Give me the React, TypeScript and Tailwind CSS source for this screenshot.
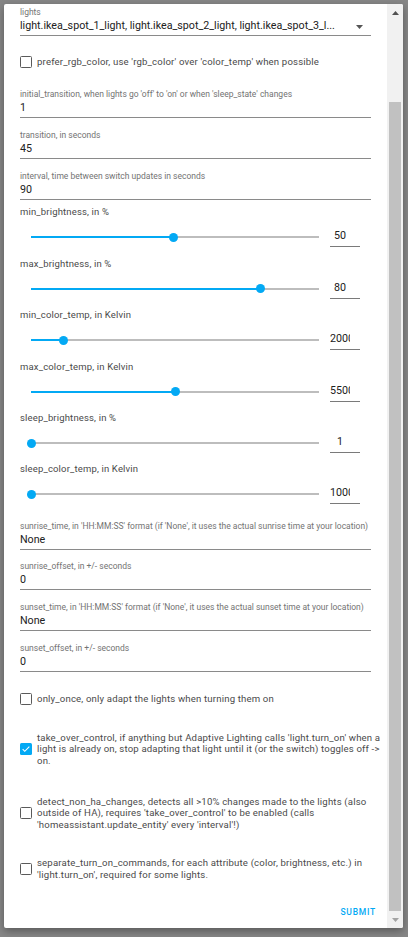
import React from "react";

type SliderDef = { label: string; frac: number; value: string; cls: string };

const sliders: SliderDef[] = [
  { label: "min_brightness, in %", frac: 49 / 99, value: "50", cls: "mt-[6.2px]" },
  { label: "max_brightness, in %", frac: 79 / 99, value: "80", cls: "mt-[10.4px]" },
  { label: "min_color_temp, in Kelvin", frac: 1000 / 9000, value: "2000", cls: "mt-[10.4px]" },
  { label: "max_color_temp, in Kelvin", frac: 4500 / 9000, value: "5500", cls: "mt-[10.4px]" },
  { label: "sleep_brightness, in %", frac: 0, value: "1", cls: "mt-[10.4px]" },
  { label: "sleep_color_temp, in Kelvin", frac: 0, value: "1000", cls: "mt-[10.4px]" },
];

function Field({ label, value, className }: { label: string; value: string; className: string }) {
  return (
    <div className={className}>
      <div className="h-[10px] text-[8.5px] leading-[10px] text-[#737373] whitespace-nowrap">{label}</div>
      <div className="h-[19px] border-b border-[#8a8a8a] text-[10.7px] leading-[18px] text-[#212121] whitespace-nowrap">
        {value}
      </div>
    </div>
  );
}

function Box({ checked }: { checked?: boolean }) {
  if (checked) {
    return (
      <div className="w-[12px] h-[12px] rounded-[1.5px] bg-[#03a9f4] flex items-center justify-center shrink-0">
        <svg width="10" height="10" viewBox="0 0 24 24">
          <path d="M4 12.5l5 5L20 6.5" fill="none" stroke="white" strokeWidth="2.6" />
        </svg>
      </div>
    );
  }
  return <div className="w-[12px] h-[12px] rounded-[1.5px] border-[1.5px] border-[#5a5a5a] shrink-0" />;
}

function CheckRow({ lines, checked, className }: { lines: string[]; checked?: boolean; className: string }) {
  return (
    <div className={className}>
      <div className="flex items-center">
        <Box checked={checked} />
        <div className="ml-[5px] text-[9.6px] leading-[11.5px] tracking-[0.017em] text-[#4a4a4a] whitespace-nowrap">
          {lines.map((l, i) => (
            <div key={i}>{l}</div>
          ))}
        </div>
      </div>
    </div>
  );
}

function Slider({ s }: { s: SliderDef }) {
  return (
    <div className={s.cls}>
      <div className="h-[12px] text-[9.5px] leading-[12px] tracking-[0.017em] text-[#4a4a4a] whitespace-nowrap">
        {s.label}
      </div>
      <div className="mt-[9px] h-[20px] flex items-start pl-[11px]">
        <div className="w-[288px] h-[20px] flex items-center">
          <div className="relative w-[288px] h-[2px] bg-[#bdbdbd]">
            <div className="absolute left-0 top-0 h-[2px] bg-[#03a9f4]" style={{ width: `${s.frac * 288}px` }} />
            <div
              className="absolute top-[-3.5px] w-[9px] h-[9px] rounded-full bg-[#03a9f4]"
              style={{ left: `${s.frac * 288 - 4.5}px` }}
            />
          </div>
        </div>
        <div className="ml-[11px] w-[30px] h-[20px] border-b border-[#7a7a7a]">
          <div className="w-[20px] overflow-hidden whitespace-nowrap text-center text-[10.7px] leading-[18px] text-[#212121]">
            {s.value}
          </div>
        </div>
      </div>
    </div>
  );
}

export default function App() {
  return (
    <div className="w-[408px] h-[937px] bg-[#878787] pt-[4px] pl-[4px] font-[Roboto,sans-serif] overflow-hidden">
      <div className="w-[399px] h-[924px] bg-white rounded-[2px] shadow-[0_3px_8px_rgba(0,0,0,0.35)] flex overflow-hidden">
        <div className="w-[383px] flex flex-col">
          <div className="pl-[16px] pr-[16px] flex flex-col">
            {/* lights */}
            <div className="mt-[3px]">
              <div className="h-[10px] text-[8.5px] leading-[10px] text-[#737373]">lights</div>
              <div className="h-[19px] border-b border-[#8a8a8a] flex items-start">
                <div className="flex-1 overflow-hidden whitespace-nowrap text-[10.7px] leading-[18px] text-[#212121]">
                  light.ikea_spot_1_light, light.ikea_spot_2_light, light.ikea_spot_3_l...
                </div>
                <svg className="ml-[4px] mr-[8px] mt-[8px]" width="7" height="4" viewBox="0 0 7 4">
                  <path d="M0 0H7L3.5 4Z" fill="#555555" />
                </svg>
              </div>
            </div>

            <CheckRow
              className="mt-[20px]"
              lines={["prefer_rgb_color, use 'rgb_color' over 'color_temp' when possible"]}
            />

            <Field
              className="mt-[20.7px]"
              label="initial_transition, when lights go 'off' to 'on' or when 'sleep_state' changes"
              value="1"
            />
            <Field className="mt-[12.3px]" label="transition, in seconds" value="45" />
            <Field className="mt-[12.3px]" label="interval, time between switch updates in seconds" value="90" />

            {sliders.map((s) => (
              <Slider key={s.label} s={s} />
            ))}

            <Field
              className="mt-[16.1px]"
              label="sunrise_time, in 'HH:MM:SS' format (if 'None', it uses the actual sunrise time at your location)"
              value="None"
            />
            <Field className="mt-[11.8px]" label="sunrise_offset, in +/- seconds" value="0" />
            <Field
              className="mt-[11.8px]"
              label="sunset_time, in 'HH:MM:SS' format (if 'None', it uses the actual sunset time at your location)"
              value="None"
            />
            <Field className="mt-[11.8px]" label="sunset_offset, in +/- seconds" value="0" />

            <CheckRow className="mt-[21px]" lines={["only_once, only adapt the lights when turning them on"]} />
            <CheckRow
              className="mt-[26.75px]"
              checked
              lines={[
                "take_over_control, if anything but Adaptive Lighting calls 'light.turn_on' when a",
                "light is already on, stop adapting that light until it (or the switch) toggles off ->",
                "on.",
              ]}
            />
            <CheckRow
              className="mt-[29.5px]"
              lines={[
                "detect_non_ha_changes, detects all >10% changes made to the lights (also",
                "outside of HA), requires 'take_over_control' to be enabled (calls",
                "'homeassistant.update_entity' every 'interval'!)",
              ]}
            />
            <CheckRow
              className="mt-[27.25px]"
              lines={[
                "separate_turn_on_commands, for each attribute (color, brightness, etc.) in",
                "'light.turn_on', required for some lights.",
              ]}
            />
          </div>
          <div className="mt-[25.8px] flex justify-end pr-[11px]">
            <div className="text-[8.5px] leading-[12px] font-medium tracking-[0.09em] text-[#03a9f4]">SUBMIT</div>
          </div>
        </div>

        {/* scrollbar */}
        <div className="w-[16px] bg-[#f1f1f1] flex flex-col">
          <div className="h-[17px] flex items-center justify-center">
            <svg width="7" height="4" viewBox="0 0 7 4">
              <path d="M3.5 0L7 4H0Z" fill="#505050" />
            </svg>
          </div>
          <div className="flex-1 flex flex-col">
            <div className="mt-[81px] flex-1 mx-[2px] bg-[#c1c1c1]" />
          </div>
          <div className="h-[17px] flex items-center justify-center">
            <svg width="7" height="4" viewBox="0 0 7 4">
              <path d="M0 0H7L3.5 4Z" fill="#a3a3a3" />
            </svg>
          </div>
        </div>
      </div>
    </div>
  );
}
